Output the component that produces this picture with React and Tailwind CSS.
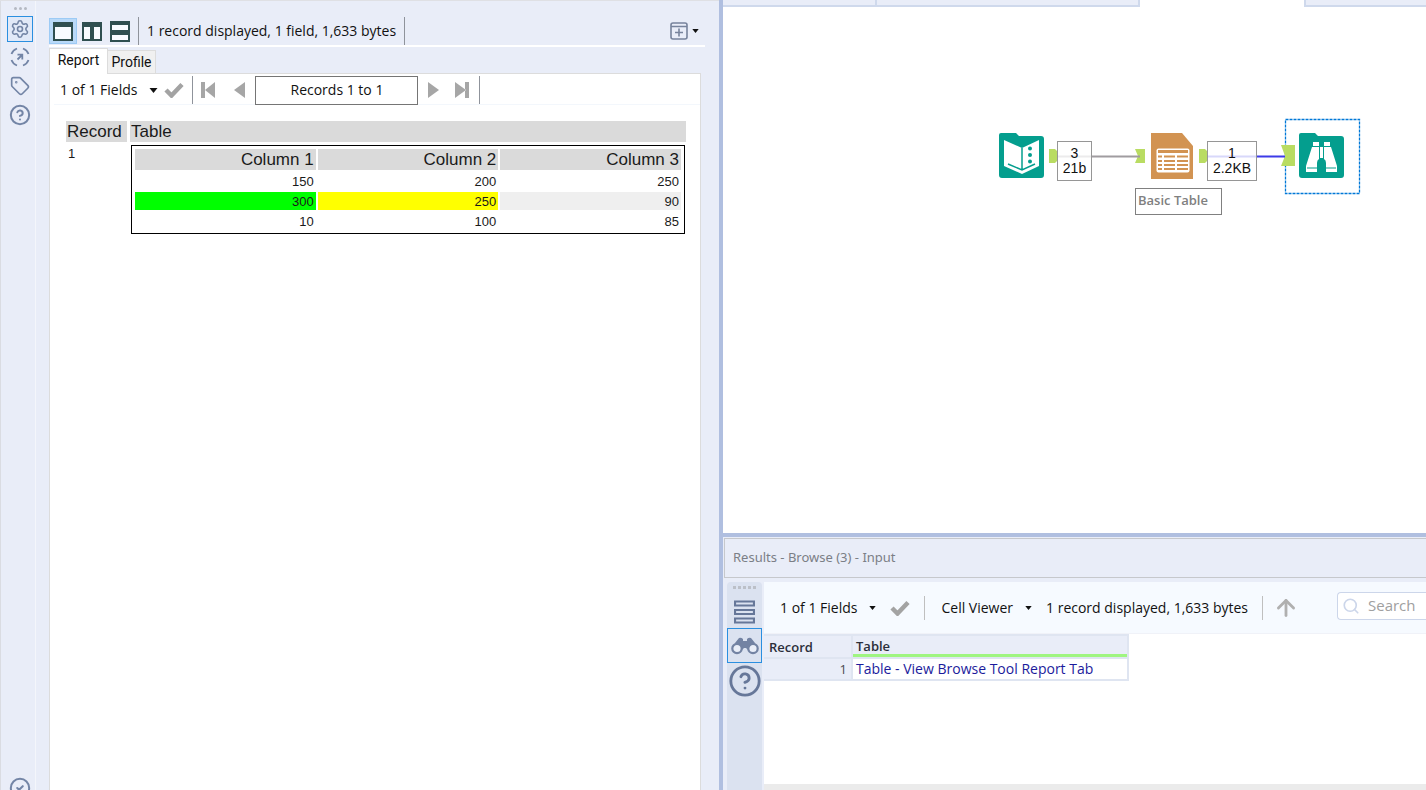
import React from 'react';
import { clsx } from 'clsx';
import { Settings, Tag, CircleHelp, ArrowUp, Search, CircleCheck } from 'lucide-react';

const reportRows = [
  [{ value: 150 }, { value: 200 }, { value: 250 }],
  [
    { value: 300, bg: 'bg-[#00ff00]' },
    { value: 250, bg: 'bg-[#ffff00]' },
    { value: 90, bg: 'bg-[#efefef]' }
  ],
  [{ value: 10 }, { value: 100 }, { value: 85 }]
];

const Caret = ({ className = '' }) => (
  <svg viewBox="0 0 8 5" className={clsx('shrink-0', className)} aria-hidden="true">
    <path d="M0 0h8L4 5z" fill="currentColor" />
  </svg>
);

const CheckMark = ({ className = '' }) => (
  <svg viewBox="0 0 20 16" className={clsx('shrink-0', className)} aria-hidden="true">
    <path d="M2 8l5.500 5.500L18 2.500" fill="none" stroke="#a3a3a3" strokeWidth="4.500" />
  </svg>
);

const Divider = () => <div className="h-7 w-px shrink-0 bg-[#8f939b]" />;

const ReconnectIcon = () => (
  <svg viewBox="0 0 20 20" className="size-5" fill="none" stroke="#7385a6" strokeWidth="1.8" aria-hidden="true">
    <path d="M7 1.500A9 9 0 0 0 1.500 7M1.500 13A9 9 0 0 0 7 18.500M13 18.500A9 9 0 0 0 18.500 13M18.500 7A9 9 0 0 0 13 1.500" />
    <path d="M7.500 12.500l4.500-4.500M7.500 7.700h4.800v4.800" />
  </svg>
);

const LeftRail = () => (
  <nav className="flex w-9 shrink-0 flex-col items-center border-x border-l-[#dadce2] border-r-[#f4f6fb] pl-1 text-[#7385a6]">
    <div className="flex h-[15px] items-center gap-[2px]">
      {[0, 1, 2].map((i) => (
        <span key={i} className="size-[3px] rounded-full bg-[#b5b9c2]" />
      ))}
    </div>
    <button aria-label="Configuration" className="flex size-[26px] items-center justify-center border border-[#2a8fe0] bg-[#e1e9f8]">
      <Settings className="size-5" strokeWidth={1.9} />
    </button>
    <div className="mt-1 flex flex-col items-center gap-2">
      <button aria-label="Navigation" className="flex size-[21px] items-center justify-center">
        <ReconnectIcon />
      </button>
      <button aria-label="Annotation" className="flex size-[21px] items-center justify-center">
        <Tag className="size-5" strokeWidth={2} />
      </button>
      <button aria-label="Help" className="flex size-[21px] items-center justify-center">
        <CircleHelp className="size-[22px] shrink-0" strokeWidth={2.2} />
      </button>
    </div>
    <button aria-label="Validate" className="-mb-2 mt-auto flex h-5 items-center">
      <CircleCheck className="size-[22px]" strokeWidth={2.2} />
    </button>
  </nav>
);

const ViewButtons = () => (
  <div className="flex">
    <button aria-label="Single pane" className="flex h-[26px] w-7 items-center justify-center border border-[#9dcbf5] bg-[#b9d9f8]">
      <svg viewBox="0 0 20 19" className="h-[19px] w-5">
        <path d="M0 0h20v19H0z" fill="#2f4f50" />
        <path d="M2 5h16v12H2z" fill="#f8fbff" />
      </svg>
    </button>
    <button aria-label="Split vertically" className="flex h-[26px] w-[29px] items-center justify-center">
      <svg viewBox="0 0 20 19" className="h-[19px] w-5">
        <path d="M0 0h20v19H0z" fill="#2f4f50" />
        <path d="M2 5h6v12H2zM12 5h6v12h-6z" fill="#f8fbff" />
      </svg>
    </button>
    <button aria-label="Split horizontally" className="flex h-[26px] w-7 items-center justify-center">
      <svg viewBox="0 0 20 21" className="h-[21px] w-5">
        <path d="M0 0h20v21H0z" fill="#2f4f50" />
        <path d="M2 4h16v5H2zM2 14h16v5H2z" fill="#f8fbff" />
      </svg>
    </button>
  </div>
);

const ReportTable = () => (
  <div className="pl-4 pr-[14px] pt-4 font-['Liberation_Sans',sans-serif] text-[#1a1a1a]">
    <table className="w-full border-separate border-spacing-0">
      <thead>
        <tr className="h-[21px] text-left text-[17px] leading-5">
          <th className="w-16 border-r-[3px] border-white bg-[#dadada] bg-clip-padding p-0 pl-px font-normal">Record</th>
          <th className="bg-[#dadada] p-0 pl-px font-normal">Table</th>
        </tr>
      </thead>
      <tbody>
        <tr>
          <td className="p-0 pl-[2px] pt-[3px] align-top text-[13px] leading-[18px]">1</td>
          <td className="p-0 pl-px pr-px pt-[3px]">
            <table className="w-full table-fixed border-separate border-spacing-[2px] border border-black p-px">
              <thead>
                <tr className="h-[21px] text-right text-[17px] leading-5">
                  <th className="bg-[#dadada] p-0 pr-[2px] font-normal">Column 1</th>
                  <th className="bg-[#dadada] p-0 pr-[2px] font-normal">Column 2</th>
                  <th className="bg-[#dadada] p-0 pr-[2px] font-normal">Column 3</th>
                </tr>
              </thead>
              <tbody>
                {reportRows.map((row, index) => (
                  <tr key={index} className="h-[18px] text-right text-[13px] leading-4">
                    {row.map((cell, i) => (
                      <td key={i} className={clsx('p-0 pr-[2px] pt-[2px]', cell.bg)}>{cell.value}</td>
                    ))}
                  </tr>
                ))}
              </tbody>
            </table>
          </td>
        </tr>
      </tbody>
    </table>
  </div>
);

const ConfigPanel = () => (
  <section className="flex min-w-0 flex-1 flex-col pl-[13px] pr-[14px] pt-4">
    {/* View toolbar */}
    <div className="flex h-[30px] shrink-0 items-center border-b-2 border-white">
      <ViewButtons />
      <div className="ml-1 flex items-center gap-2 whitespace-nowrap text-sm">
        <Divider />
        <span>1 record displayed, 1 field, 1,633 bytes</span>
        <Divider />
      </div>
      <button aria-label="New window" className="ml-auto mr-[6px] flex items-center gap-1">
        <svg viewBox="0 0 18 18" className="size-[18px]" fill="none" stroke="#77839c" strokeWidth="1.600">
          <rect x="1" y="1" width="16" height="16" rx="2" />
          <path d="M1 4.500h16M9 6.500v8M5 10.500h8" />
        </svg>
        <Caret className="h-1 w-[7px]" />
      </button>
    </div>

    {/* Tabs */}
    <div role="tablist" className="flex h-[26px] shrink-0 items-end font-[Roboto,sans-serif] text-[14px]">
      <button role="tab" aria-selected="true" className="z-10 -mb-px h-[26px] w-[59px] border border-b-0 border-[#dcdcdc] bg-white pb-[2px]">
        Report
      </button>
      <button role="tab" aria-selected="false" className="h-[23px] w-12 border border-l-0 border-b-0 border-[#dcdcdc] bg-[#f0f0f0]">
        Profile
      </button>
    </div>

    <div className="mr-1 flex min-h-0 flex-1 flex-col border border-b-0 border-[#dcdcdc] bg-white">
      {/* Record navigation */}
      <div className="ml-1 flex h-[31px] shrink-0 items-center whitespace-nowrap border-b border-[#f3f7fc] pl-[6px] pt-[2px] text-sm">
        <button className="flex items-center gap-3">
          1 of 1 Fields
          <Caret className="h-[5px] w-[9px]" />
        </button>
        <button aria-label="Apply" className="ml-[6px] mr-2"><CheckMark className="h-4 w-5" /></button>
        <Divider />
        <button aria-label="First record" className="ml-2">
          <svg viewBox="0 0 15 16" className="h-4 w-[15px]" fill="#a6a6a6">
            <path d="M0 0h4v16H0zM14 0v16L4 8z" />
          </svg>
        </button>
        <button aria-label="Previous record" className="ml-[18px]">
          <svg viewBox="0 0 11 16" className="h-4 w-[11px]" fill="#a6a6a6"><path d="M11 0v16L0 8z" /></svg>
        </button>
        <button className="ml-[10px] h-[29px] w-[163px] border border-[#757575] bg-white">Records 1 to 1</button>
        <button aria-label="Next record" className="ml-[10px]">
          <svg viewBox="0 0 11 16" className="h-4 w-[11px]" fill="#a6a6a6"><path d="M0 0v16l11-8z" /></svg>
        </button>
        <button aria-label="Last record" className="ml-4 mr-[9px]">
          <svg viewBox="0 0 15 16" className="h-4 w-[15px]" fill="#a6a6a6">
            <path d="M10 0h4v16h-4zM0 0v16l11-8z" />
          </svg>
        </button>
        <Divider />
      </div>
      <ReportTable />
    </div>
  </section>
);

const InputTool = () => (
  <svg viewBox="0 0 45 45" className="size-[45px]">
    <path d="M2 0h15l3 3h22q3 0 3 3v36q0 3-3 3H3q-3 0-3-3V2q0-2 2-2z" fill="#049e8e" />
    <path d="M5 7l18 8 17-8v26l-17 8-18-8z" fill="#fff" />
    <path d="M23 15v21M9 31l14 6 13-6" fill="none" stroke="#049e8e" strokeWidth="1.500" />
    <g fill="#049e8e">
      <circle cx="31" cy="15.500" r="2" />
      <circle cx="31" cy="22" r="2" />
      <circle cx="31" cy="28.500" r="2" />
    </g>
  </svg>
);

const TableTool = () => (
  <svg viewBox="0 0 42 46" className="h-[46px] w-[42px]">
    <path d="M0 0h31l11 13v33H0z" fill="#d29352" />
    <rect x="5.500" y="15.500" width="33" height="24" rx="2" fill="#fff" />
    <path d="M7 18.500h30" stroke="#d29352" strokeWidth="3" />
    <path
      d="M7 23.500h4M13 23.500h11M26 23.500h11M7 28h4M13 28h11M26 28h11M7 32h4M13 32h11M26 32h11M7 36h4M13 36h11M26 36h11"
      stroke="#d29352"
      strokeWidth="1.800"
    />
  </svg>
);

const BrowseTool = () => (
  <svg viewBox="0 0 45 45" className="size-[45px]">
    <path d="M2 0h14l3 3h23q3 0 3 3v36q0 3-3 3H3q-3 0-3-3V2q0-2 2-2z" fill="#049e8e" />
    <g fill="#fff">
      <path d="M14 9h6v4h-6zM13 14h7v12q-2 1-2 4v9H7v-6z" />
      <path d="M25 9h6v4h-6zM32 14h-7v12q2 1 2 4v9h11v-6z" />
      <path d="M21 14h3v11h-3z" />
    </g>
    <path d="M8 35h10M27 35h10" stroke="#049e8e" strokeWidth="1.200" />
  </svg>
);

const Canvas = () => (
  <div className="relative min-h-0 flex-1 overflow-hidden bg-white">
    {/* Connections, anchors and the selection outline */}
    <svg className="absolute left-0 top-0 h-60 w-[680px]" viewBox="0 0 680 240">
      <g fill="#b9dc62">
        <path d="M326 142h6l3 3v8l-3 3h-6z" />
        <path d="M412 142h10v14h-10l3-7z" />
        <path d="M476 142h6l3 3v8l-3 3h-6z" />
      </g>
      <path d="M334 149.500h83" stroke="#a09ca0" strokeWidth="2" />
      <rect x="562.500" y="112.500" width="74" height="74" fill="none" stroke="#0078d7" strokeWidth="1.300" strokeDasharray="3 1" />
      <path d="M558 138h14v21h-14l4-10z" fill="#b9dc62" />
      <path d="M484 149.500h78" stroke="#3d3be8" strokeWidth="2" />
    </svg>
    <div className="absolute left-[276px] top-[126px]"><InputTool /></div>
    <div className="absolute left-[334px] top-[134px] flex h-10 w-[35px] flex-col justify-center border border-[#969696] bg-white/80 text-center font-['Liberation_Sans',sans-serif] text-[14px] leading-[15px]">
      <span>3</span>
      <span>21b</span>
    </div>
    <div className="absolute left-[428px] top-[126px]"><TableTool /></div>
    <div className="absolute left-[484px] top-[134px] flex h-10 w-[50px] flex-col justify-center border border-[#969696] bg-white/80 text-center font-['Liberation_Sans',sans-serif] text-[14px] leading-[15px]">
      <span>1</span>
      <span>2.2KB</span>
    </div>
    <div className="absolute left-[576px] top-[126px]"><BrowseTool /></div>
    <div className="absolute left-[412px] top-[181px] h-[27px] w-[87px] border border-[#808080] bg-white pl-[2px] text-[13px] font-semibold leading-[23px] text-[#808080]">
      Basic Table
    </div>
  </div>
);

const ResultsPanel = () => (
  <section className="flex h-[257px] shrink-0 flex-col border-t-4 border-[#b0bfe0] bg-[#e9edf8] pl-px pt-px">
    <h2 className="flex h-10 shrink-0 items-center border border-r-0 border-[#c6c8cc] pl-2 font-['Noto_Sans',sans-serif] text-[13px] text-[#7b7f86]">
      Results - Browse (3) - Input
    </h2>
    <div className="flex min-h-0 flex-1 pl-[3px] pt-1">
      <nav className="flex w-[35px] shrink-0 flex-col items-center rounded-t bg-[#dbe2f0] text-[#667799]">
        <div className="flex h-[10px] items-center gap-[2px]">
          {[0, 1, 2, 3, 4].map((i) => (
            <span key={i} className="size-[3px] bg-[#bcc0c8]" />
          ))}
        </div>
        <button aria-label="Messages" className="flex h-9 w-full items-center justify-center">
          <svg viewBox="0 0 21 24" className="mt-1 h-6 w-[21px]" fill="none" stroke="currentColor" strokeWidth="2.200">
            <path d="M1 1.500h19v4H1zM1 10h19v4H1zM1 18.500h19v4H1z" />
          </svg>
        </button>
        <button aria-label="Browse results" className="flex size-[35px] items-center justify-center border border-[#2a8fe0]">
          <svg viewBox="0 0 28 18" className="h-[18px] w-7 shrink-0">
            <path d="M4 6l4-5q2-1 4 1v2h4V2q2-2 4-1l4 5-5 9-4-4h-2l-4 4z" fill="#7383a3" />
            <circle cx="6" cy="11.500" r="4.700" fill="#e9eef8" stroke="#7383a3" strokeWidth="2.200" />
            <circle cx="22" cy="11.500" r="4.700" fill="#e9eef8" stroke="#7383a3" strokeWidth="2.200" />
          </svg>
        </button>
        <button aria-label="Help" className="flex size-9 items-center justify-center">
          <CircleHelp className="size-[34px]" strokeWidth={2} />
        </button>
      </nav>

      <div className="ml-[2px] flex min-w-0 flex-1 flex-col bg-white">
        <div className="flex h-[52px] shrink-0 items-center whitespace-nowrap border-b border-[#f0f2f8] bg-[#f6faff] pl-4 text-sm">
          <button className="flex items-center gap-3">
            1 of 1 Fields
            <Caret className="h-1 w-[7px]" />
          </button>
          <button aria-label="Apply" className="mx-[14px]"><CheckMark className="h-4 w-5" /></button>
          <div className="h-6 w-px bg-[#bfbfbf]" />
          <button className="ml-4 flex items-center gap-3">
            Cell Viewer
            <Caret className="h-1 w-[7px]" />
          </button>
          <span className="mx-[14px]">1 record displayed, 1,633 bytes</span>
          <div className="h-6 w-px bg-[#bfbfbf]" />
          <button aria-label="Up" className="ml-[10px]">
            <ArrowUp className="size-[26px] text-[#b0b0b0]" strokeWidth={2.6} />
          </button>
          <label className="mb-1 ml-auto flex h-7 w-[89px] items-center gap-2 rounded-l border border-r-0 border-[#ccd6ea] bg-white pl-1">
            <Search className="size-[18px] shrink-0 text-[#ccd6ea]" strokeWidth={2.2} />
            <input type="text" aria-label="Search" placeholder="Search" className="w-full min-w-0 text-[15px] outline-none placeholder:text-[#a0a0a0]" />
          </label>
        </div>

        <table className="w-[365px] border-collapse text-[13px]">
          <thead>
            <tr className="h-[23px] bg-[#e9edf8] text-left text-[#2b2f3a]">
              <th className="w-[88px] border-2 border-l-0 border-[#dfe5f1] p-0 pl-[5px] font-semibold leading-5">Record</th>
              <th className="border-2 border-[#dfe5f1] p-0 font-semibold">
                <div className="border-b-[3px] border-[#9ff581] pl-[3px] pt-[2px] leading-4">Table</div>
              </th>
            </tr>
          </thead>
          <tbody>
            <tr className="h-[22px]">
              <td className="border-2 border-l-0 border-[#dfe5f1] bg-[#e9edf8] p-0 pr-1 text-right leading-5 text-[#4a4a52]">1</td>
              <td className="border-2 border-[#dfe5f1] p-0 pl-[3px] text-sm leading-5">
                <a href="#report" className="text-[#1b1b9c]">Table - View Browse Tool Report Tab</a>
              </td>
            </tr>
          </tbody>
        </table>
        <div className="mt-auto h-[6px] bg-[#ebebeb]" />
      </div>
    </div>
  </section>
);

const App = () => {
  return (
    <div className="grid h-screen grid-cols-[719fr_707fr] overflow-hidden bg-[#e9edf8] font-['Open_Sans',sans-serif] text-[#111111]">
      <div className="flex min-w-0 border-t border-[#dfe0e4]">
        <LeftRail />
        <ConfigPanel />
      </div>
      <main className="flex min-h-0 min-w-0 flex-col border-l-4 border-[#b0bfe0]">
        {/* Bottom edge of the workflow tabs */}
        <div className="flex h-[7px] shrink-0 bg-white">
          <div className="w-[154px] border-b-2 border-r-2 border-[#cfd9ec] bg-[#e9edf8]" />
          <div className="w-[263px] border-b-2 border-r-2 border-[#cfd9ec] bg-[#e9edf8]" />
          <div className="w-[164px]" />
          <div className="flex-1 border-b-2 border-l-2 border-[#cfd9ec] bg-[#e9edf8]" />
        </div>
        <Canvas />
        <ResultsPanel />
      </main>
    </div>
  );
};

export default App;
